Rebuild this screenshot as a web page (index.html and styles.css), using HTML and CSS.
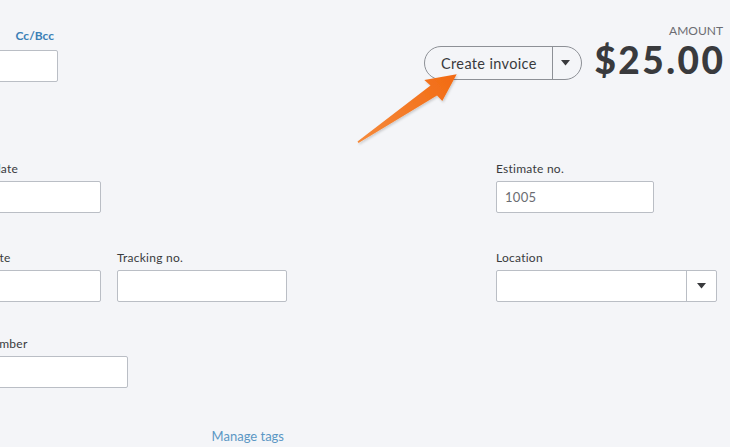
FILE: index.html
```html
<!DOCTYPE html>
<html lang="en">
<head>
  <meta charset="UTF-8">
  <title>Estimate</title>
  <link rel="stylesheet" href="styles.css">
</head>
<body>
  <div class="page">
    <div class="top">
      <div class="email-field">
        <a class="cc-link" href="#">Cc/Bcc</a>
        <input class="text-input email-input" type="text">
      </div>
      <div class="actions">
        <div class="split-button">
          <button class="split-main">Create invoice</button>
          <button class="split-caret">
            <svg width="9" height="6" viewBox="0 0 9 6"><path d="M0 0h9L4.5 5.5z" fill="#393a3d"/></svg>
          </button>
        </div>
        <div class="amount">
          <div class="amount-label">AMOUNT</div>
          <div class="amount-value">$25.00</div>
        </div>
      </div>
    </div>

    <div class="form">
      <div class="left-col">
        <div class="row">
          <div class="field w158">
            <label>Estimate date</label>
            <input class="text-input" type="text">
          </div>
        </div>
        <div class="row row-ship">
          <div class="field w158">
            <label>Service date</label>
            <input class="text-input" type="text">
          </div>
          <div class="field w170">
            <label>Tracking no.</label>
            <input class="text-input" type="text">
          </div>
        </div>
        <div class="row row-po">
          <div class="field w185">
            <label>Project number</label>
            <input class="text-input" type="text">
          </div>
        </div>
        <div class="tags-row">
          <a class="tags-link" href="#">Manage tags</a>
        </div>
      </div>

      <div class="right-col">
        <div class="field w158">
          <label>Estimate no.</label>
          <input class="text-input" type="text" value="1005">
        </div>
        <div class="field row-ship">
          <label>Location</label>
          <div class="select">
            <div class="select-box"></div>
            <div class="select-caret">
              <svg width="9" height="6" viewBox="0 0 9 6"><path d="M0 0h9L4.5 5.5z" fill="#393a3d"/></svg>
            </div>
          </div>
        </div>
      </div>
    </div>
  </div>

  <svg class="callout" width="730" height="447" viewBox="0 0 730 447">
    <defs>
      <linearGradient id="arrowFill" x1="358" y1="143" x2="457" y2="73" gradientUnits="userSpaceOnUse">
        <stop offset="0" stop-color="#f58a3c"/>
        <stop offset="1" stop-color="#f26a12"/>
      </linearGradient>
      <filter id="arrowShadow" x="-10%" y="-10%" width="130%" height="130%">
        <feDropShadow dx="1" dy="1.5" stdDeviation="1.2" flood-color="#000" flood-opacity="0.18"/>
      </filter>
    </defs>
    <path d="M456.7 74.3 L442.3 101 L437 95.5 L358.5 143 L357.5 141.5 L430.5 85.5 L424.3 80 Z" fill="url(#arrowFill)" filter="url(#arrowShadow)"/>
  </svg>
</body>
</html>
```

FILE: styles.css
```css
body {
  margin: 0;
  padding: 0;
  width: 730px;
  height: 447px;
  overflow: hidden;
  background-color: #f4f5f8;
  font-family: Lato, "Open Sans", Arial, sans-serif;
  color: #393a3d;
  position: relative;
}
.page {
  margin-left: -57px;
  padding-right: 13px;
}
.top {
  display: flex;
  justify-content: space-between;
  align-items: flex-start;
  height: 161px;
}
.email-field {
  width: 115px;
  padding-top: 28px;
  display: flex;
  flex-direction: column;
  align-items: flex-end;
}
.cc-link {
  color: #3b7fb6;
  font-size: 12px;
  font-weight: bold;
  line-height: 16px;
  text-decoration: none;
  margin-right: 4px;
  margin-bottom: 6px;
}
.email-input {
  width: 100%;
}
.actions {
  display: flex;
  align-items: flex-start;
  gap: 12px;
  margin-right: -6px;
}
.split-button {
  margin-top: 46px;
  display: flex;
  height: 34px;
  border: 1px solid #8d9096;
  border-radius: 17px;
  box-sizing: border-box;
  overflow: hidden;
}
.split-button button {
  background: transparent;
  border: none;
  font-family: inherit;
  color: #393a3d;
  cursor: pointer;
  padding: 0;
}
.split-main {
  width: 128px;
  font-size: 14.5px;
  letter-spacing: 0.35px;
  border-right: 1px solid #8d9096 !important;
}
.split-caret {
  width: 28px;
  display: flex;
  align-items: center;
  justify-content: center;
  padding-right: 3px !important;
}
.amount {
  margin-top: 24px;
  text-align: right;
}
.amount-label {
  font-size: 12px;
  line-height: 14px;
  color: #6b6c72;
}
.amount-value {
  font-size: 37px;
  font-weight: 900;
  line-height: 44px;
  letter-spacing: 2.5px;
  margin-right: -2.5px;
}
.form {
  display: grid;
  grid-template-columns: 553px 221px;
}
.row {
  display: flex;
  gap: 16px;
}
.row-ship {
  margin-top: 37px;
}
.row-po {
  margin-top: 34px;
}
.field {
  display: flex;
  flex-direction: column;
}
.field label {
  font-size: 12px;
  line-height: 16px;
  letter-spacing: 0.25px;
  margin-bottom: 4px;
  color: #393a3d;
}
.w158 { width: 158px; }
.w170 { width: 170px; }
.w185 { width: 185px; }
.text-input {
  height: 32px;
  box-sizing: border-box;
  border: 1px solid #babec5;
  border-radius: 2px;
  background: white;
  font-family: inherit;
  font-size: 13px;
  letter-spacing: 0.3px;
  color: #6b6c72;
  padding: 0 8px;
}
.select {
  display: flex;
  height: 32px;
  box-sizing: border-box;
  border: 1px solid #babec5;
  border-radius: 2px;
  background: white;
}
.select-box {
  flex: 1;
  border-right: 1px solid #babec5;
}
.select-caret {
  width: 29px;
  display: flex;
  align-items: center;
  justify-content: center;
}
.tags-row {
  width: 341px;
  text-align: right;
  margin-top: 39px;
  line-height: 16px;
}
.tags-link {
  font-size: 13px;
  color: #5b97c4;
  text-decoration: none;
}
.callout {
  position: absolute;
  left: 0;
  top: 0;
  pointer-events: none;
}
```
